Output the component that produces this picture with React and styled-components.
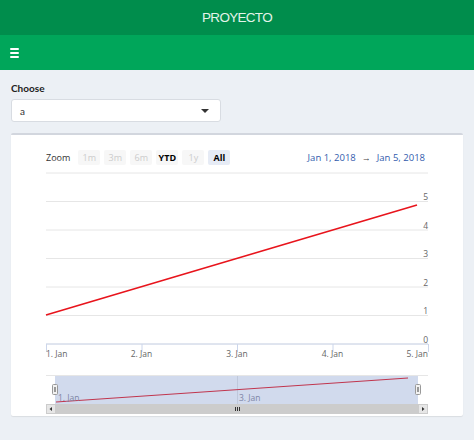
import React from "react";
import styled, { createGlobalStyle } from "styled-components";

const Global = createGlobalStyle`
  html, body { margin: 0; padding: 0; background: #ecf0f5; }
  body { width: 474px; height: 440px; overflow: hidden; font-family: "Open Sans", "Liberation Sans", sans-serif; }
`;

const Page = styled.div`
  display: flex;
  flex-direction: column;
  height: 440px;
  background: #ecf0f5;
`;

const Header = styled.header`
  height: 35px;
  background: #008d4c;
  display: flex;
  align-items: center;
  justify-content: center;
  color: #e3f4ea;
  font-family: "Liberation Sans", Arial, sans-serif;
  font-size: 13.5px;
  font-weight: 400;
  letter-spacing: -0.7px;
`;

const NavBar = styled.nav`
  height: 35px;
  background: #00a65a;
  display: flex;
  align-items: center;
  padding-left: 10px;
`;

const Burger = styled.span`
  display: flex;
  flex-direction: column;
  gap: 2px;
  width: 9px;
  & > i { display: block; height: 2px; background: #ffffff; border-radius: 1px; }
`;

const Content = styled.main`
  padding: 12px 11px 0 11px;
  display: flex;
  flex-direction: column;
`;

const Label = styled.label`
  font-family: "Lato", "Open Sans", sans-serif;
  font-weight: 700;
  font-size: 10px;
  color: #222;
  line-height: 12px;
  margin-bottom: 5px;
`;

const Select = styled.div`
  width: 210px;
  height: 23px;
  box-sizing: border-box;
  background: #fff;
  border: 1px solid #d8dce2;
  border-radius: 3px;
  display: flex;
  align-items: center;
  justify-content: space-between;
  padding: 0 11px 0 8px;
  font-family: "Lato", "Open Sans", sans-serif;
  font-size: 10px;
  color: #333;
`;

const Caret = styled.span`
  width: 0;
  height: 0;
  border-left: 4px solid transparent;
  border-right: 4px solid transparent;
  border-top: 4px solid #333;
`;

const Box = styled.section`
  margin-top: 11px;
  width: 452px;
  height: 283px;
  box-sizing: border-box;
  background: #fff;
  border-top: 2px solid #d2d6de;
  border-radius: 2px;
  box-shadow: 0 1px 1px rgba(0,0,0,0.08);
  padding: 15px 35px 0 35px;
  display: flex;
  flex-direction: column;
`;

const Toolbar = styled.div`
  height: 15px;
  display: flex;
  align-items: center;
  justify-content: space-between;
  font-size: 9px;
`;

const Zoomers = styled.div`
  display: flex;
  align-items: center;
  gap: 4px;
`;

const ZoomLabel = styled.span`
  color: #333;
  margin-right: 4px;
`;

const RangeBtn = styled.span`
  width: 22px;
  height: 15px;
  display: flex;
  align-items: center;
  justify-content: center;
  border-radius: 2px;
  background: ${p => (p.$active ? "#e6ebf5" : "#f7f7f7")};
  color: ${p => (p.$disabled ? "#cccccc" : "#000")};
  font-weight: ${p => (p.$disabled ? 400 : 700)};
`;

const DateRange = styled.div`
  display: flex;
  align-items: center;
  gap: 6px;
  padding-right: 3px;
  color: #335cad;
  font-size: 9.5px;
  & > b { font-weight: 400; color: #444; font-size: 9px; }
`;

const Plot = styled.svg`
  display: block;
  overflow: visible;
  font-family: "Open Sans", "Liberation Sans", sans-serif;
`;

const yVals = [6, 5, 4, 3, 2, 1, 0];
const gy = k => 8 + 28.5 * k;
const ticks = [0, 95.5, 191, 286.5, 382];
const xLabels = ["1. Jan", "2. Jan", "3. Jan", "4. Jan", "5. Jan"];

function Chart() {
  return (
    <Plot width="382" height="250" viewBox="0 0 382 250">
      {yVals.map((v, k) => (
        <g key={v}>
          <line x1="0" x2="382" y1={gy(k)} y2={gy(k)} stroke="#e6e6e6" strokeWidth="1" />
          {v !== 6 && (
            <text x="382" y={gy(k) - 1.5} textAnchor="end" fontSize="8.5" fill="#666">{v}</text>
          )}
        </g>
      ))}
      <line x1="0" x2="382" y1="179" y2="179" stroke="#ccd6eb" strokeWidth="1" />
      {ticks.map(t => (
        <line key={t} x1={t + 0.5} x2={t + 0.5} y1="179" y2="187" stroke="#ccd6eb" strokeWidth="1" />
      ))}
      {xLabels.map((l, i) => (
        <text
          key={l}
          x={ticks[i]}
          y="192"
          fontSize="8.5"
          fill="#666"
          textAnchor={i === 0 ? "start" : i === 4 ? "end" : "middle"}
        >{l}</text>
      ))}
      <line x1="0" y1="150" x2="371" y2="40" stroke="#e8141c" strokeWidth="1.6" />

      {/* navigator */}
      <line x1="0" x2="382" y1="210.5" y2="210.5" stroke="#e6e6e6" />
      <line x1="191.5" x2="191.5" y1="210" y2="239" stroke="#e6e6e6" />
      <polyline points="10,237 362,213" fill="none" stroke="#e8141c" strokeWidth="1" />
      <rect x="9" y="211" width="363" height="28" fill="rgba(102,133,194,0.3)" />
      <text x="12" y="236" fontSize="8.5" fill="#7f86a6">1. Jan</text>
      <text x="193" y="236" fontSize="8.5" fill="#7f86a6">3. Jan</text>
      <g>
        <rect x="6.5" y="219.5" width="5" height="10" rx="1" fill="#f2f2f2" stroke="#999" />
        <line x1="8.5" x2="8.5" y1="222" y2="227" stroke="#999" />
        <line x1="9.5" x2="9.5" y1="222" y2="227" stroke="#999" />
        <rect x="369.5" y="219.5" width="5" height="10" rx="1" fill="#f2f2f2" stroke="#999" />
        <line x1="371.5" x2="371.5" y1="222" y2="227" stroke="#999" />
        <line x1="372.5" x2="372.5" y1="222" y2="227" stroke="#999" />
      </g>

      {/* scrollbar */}
      <rect x="0" y="239" width="382" height="10" fill="#f2f2f2" />
      <rect x="9" y="239" width="363" height="10" fill="#cccccc" />
      <rect x="0.5" y="239.5" width="9" height="9" fill="#e6e6e6" stroke="#cccccc" />
      <rect x="372.5" y="239.5" width="9" height="9" fill="#e6e6e6" stroke="#cccccc" />
      <path d="M3.5 244 L6 242 L6 246 Z" fill="#333" />
      <path d="M378.5 244 L376 242 L376 246 Z" fill="#333" />
      <line x1="189.5" x2="189.5" y1="242" y2="246" stroke="#333" />
      <line x1="191.5" x2="191.5" y1="242" y2="246" stroke="#333" />
      <line x1="193.5" x2="193.5" y1="242" y2="246" stroke="#333" />
    </Plot>
  );
}

export default function App() {
  return (
    <Page>
      <Global />
      <Header>PROYECTO</Header>
      <NavBar>
        <Burger><i /><i /><i /></Burger>
      </NavBar>
      <Content>
        <Label>Choose</Label>
        <Select>
          <span>a</span>
          <Caret />
        </Select>
        <Box>
          <Toolbar>
            <Zoomers>
              <ZoomLabel>Zoom</ZoomLabel>
              <RangeBtn $disabled>1m</RangeBtn>
              <RangeBtn $disabled>3m</RangeBtn>
              <RangeBtn $disabled>6m</RangeBtn>
              <RangeBtn>YTD</RangeBtn>
              <RangeBtn $disabled>1y</RangeBtn>
              <RangeBtn $active>All</RangeBtn>
            </Zoomers>
            <DateRange>
              <span>Jan 1, 2018</span>
              <b>→</b>
              <span>Jan 5, 2018</span>
            </DateRange>
          </Toolbar>
          <Chart />
        </Box>
      </Content>
    </Page>
  );
}
